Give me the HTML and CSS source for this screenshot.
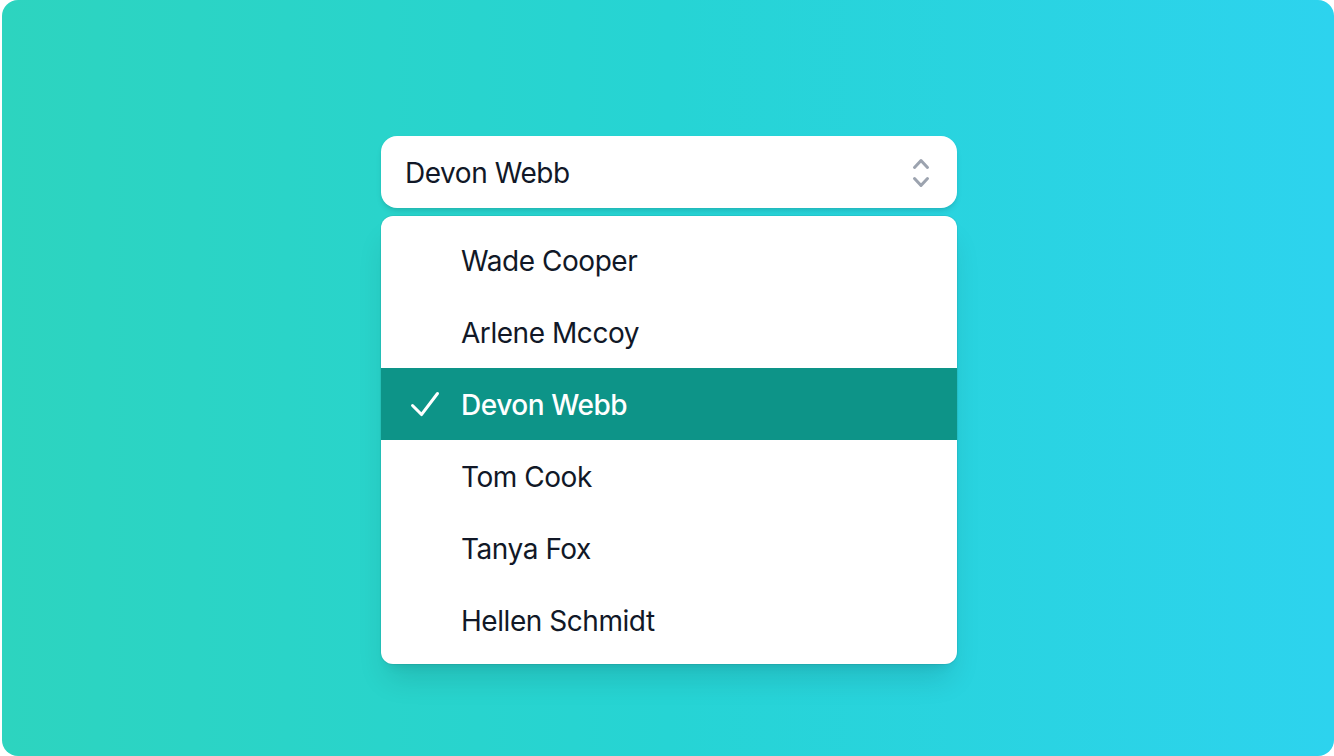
FILE: index.html
```html
<!DOCTYPE html>
<html lang="en">
<head>
<meta charset="utf-8">
<title>Listbox</title>
<link rel="stylesheet" href="styles.css">
</head>
<body>
<div class="canvas">
  <div class="listbox">
    <button class="trigger" type="button">
      <span class="trigger-label">Devon Webb</span>
      <svg class="updown" viewBox="0 0 20 20" fill="currentColor" aria-hidden="true"><path fill-rule="evenodd" d="M10 3a.75.75 0 01.55.24l3.25 3.5a.75.75 0 11-1.1 1.020L10 4.852 7.3 7.76a.75.75 0 01-1.1-1.02l3.25-3.5A.75.75 0 0110 3zm-3.76 9.2a.75.75 0 011.06.04l2.7 2.908 2.7-2.908a.75.75 0 111.1 1.02l-3.25 3.5a.75.75 0 01-1.1 0l-3.250-3.5a.75.75 0 01.04-1.06z" clip-rule="evenodd"/></svg>
    </button>
    <ul class="options">
      <li class="option">Wade Cooper</li>
      <li class="option">Arlene Mccoy</li>
      <li class="option selected">
        <svg class="check" viewBox="0 0 20 20" fill="currentColor" aria-hidden="true"><path fill-rule="evenodd" d="M16.704 4.153a.75.75 0 01.143 1.052l-8 10.5a.75.75 0 01-1.127.075l-4.5-4.5a.75.75 0 011.06-1.06l3.894 3.893 7.48-9.817a.75.75 0 011.05-.143z" clip-rule="evenodd"/></svg>
        Devon Webb
      </li>
      <li class="option">Tom Cook</li>
      <li class="option">Tanya Fox</li>
      <li class="option">Hellen Schmidt</li>
    </ul>
  </div>
</div>
</body>
</html>
```
FILE: styles.css
```css
* { box-sizing: border-box; }
html, body { margin: 0; padding: 0; background: #ffffff; }
body {
  width: 1334px;
  height: 756px;
  padding-left: 2px;
  font-family: Inter, "Noto Sans", sans-serif;
  -webkit-font-smoothing: antialiased;
}
.canvas {
  width: 1332px;
  height: 756px;
  border-radius: 16px;
  background: linear-gradient(to right, #2dd4bf 0%, #26d4d4 50%, #2dd3ee 100%);
  padding-top: 136px;
  display: flex;
  justify-content: center;
}
.listbox {
  width: 576px;
  margin-left: 2px;
}
.trigger {
  width: 100%;
  height: 72px;
  display: flex;
  align-items: center;
  justify-content: space-between;
  padding: 1px 16px 0 24px;
  border: 0;
  border-radius: 16px;
  background: #ffffff;
  box-shadow: 0 4px 6px -1px rgba(0,0,0,0.1), 0 2px 4px -2px rgba(0,0,0,0.1);
  font-family: inherit;
  font-size: 28px;
  line-height: 40px;
  letter-spacing: -0.45px;
  color: #111827;
  text-align: left;
}
.updown { width: 40px; height: 40px; color: #9ca3af; }
.options {
  list-style: none;
  margin: 8px 0 0;
  padding: 8px 0;
  background: #ffffff;
  border-radius: 12px;
  box-shadow: 0 20px 30px -6px rgba(0,0,0,0.12), 0 8px 12px -8px rgba(0,0,0,0.12), 0 0 0 1px rgba(0,0,0,0.05);
}
.option {
  position: relative;
  height: 72px;
  padding: 17px 32px 15px 80px;
  font-size: 28px;
  line-height: 40px;
  letter-spacing: -0.45px;
  color: #111827;
}
.option.selected {
  background: #0d9488;
  color: #ffffff;
  font-weight: 500;
}
.check {
  position: absolute;
  left: 24px;
  top: 16px;
  width: 40px;
  height: 40px;
}
```
